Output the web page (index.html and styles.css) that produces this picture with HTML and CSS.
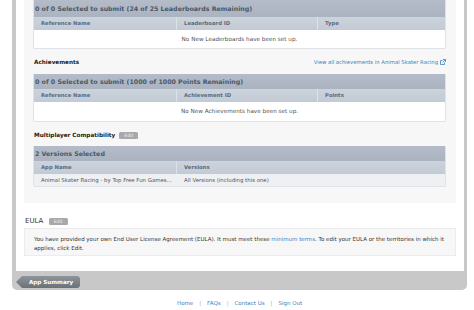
FILE: index.html
```html
<!DOCTYPE html>
<html>
<head>
<meta charset="utf-8">
<link rel="stylesheet" href="styles.css">
</head>
<body>
<div class="frame">
  <div class="sheet">
    <div class="panel">
      <div class="tbl">
        <div class="tbl-head t1">0 of 0 Selected to submit (24 of 25 Leaderboards Remaining)</div>
        <div class="cols">
          <div class="c c1">Reference Name</div>
          <div class="c c2">Leaderboard ID</div>
          <div class="c c3">Type</div>
        </div>
        <div class="empty e1">No New Leaderboards have been set up.</div>
      </div>

      <div class="title t-ach">
        <span>Achievements</span>
        <a class="ext" href="#">View all achievements in Animal Skater Racing
          <svg class="exticon" width="6" height="6" viewBox="0 0 6 6"><path d="M0.5 1.5h2M0.5 1.5v4h4v-2" fill="none" stroke="#3b82c4" stroke-width="0.8"/><path d="M3 0.5h2.5v2.5M5.5 0.5L2.5 3.5" fill="none" stroke="#3b82c4" stroke-width="0.8"/></svg>
        </a>
      </div>

      <div class="tbl">
        <div class="tbl-head">0 of 0 Selected to submit (1000 of 1000 Points Remaining)</div>
        <div class="cols">
          <div class="c c1">Reference Name</div>
          <div class="c c2">Achievement ID</div>
          <div class="c c3">Points</div>
        </div>
        <div class="empty e2">No New Achievements have been set up.</div>
      </div>

      <div class="title t-mp">
        <span>Multiplayer Compatibility <span class="edit">Edit</span></span>
      </div>

      <div class="tbl">
        <div class="tbl-head">2 Versions Selected</div>
        <div class="cols">
          <div class="c c1">App Name</div>
          <div class="c c2 last">Versions</div>
        </div>
        <div class="row">
          <div class="c c1">Animal Skater Racing - by Top Free Fun Games...</div>
          <div class="c c2">All Versions (including this one)</div>
        </div>
      </div>
    </div>

    <div class="eula-head">EULA <span class="edit">Edit</span></div>
    <div class="eula-box">You have provided your own End User License Agreement (EULA). It must meet these <a href="#">minimum terms</a>. To edit your EULA or the territories in which it applies, click Edit.</div>
  </div>
  <div class="bottom">
    <a class="back" href="#">App Summary</a>
  </div>
</div>
<div class="footer">
  <a href="#">Home</a><span class="sep">|</span><a href="#">FAQs</a><span class="sep">|</span><a href="#">Contact Us</a><span class="sep">|</span><a href="#">Sign Out</a>
</div>
</body>
</html>
```

FILE: styles.css
```css
* { box-sizing: border-box; }
html, body { margin: 0; padding: 0; background: #fff; }
body {
  font-family: "DejaVu Sans", "Noto Sans", sans-serif;
  font-size: 5.7px;
  color: #333;
  width: 474px;
  height: 310px;
  overflow: hidden;
}
a { color: #3a7fc2; text-decoration: none; }

.frame {
  margin: 0 7px 0 12px;
  background: #c8c8c8;
  padding: 0 3px 0 4px;
  border-radius: 0 0 5px 5px;
}
.sheet {
  background: #fff;
  padding: 0 8px 15px 8px;
}
.panel {
  background: #f7f7f7;
  padding: 0 10px 16px 9px;
}

.tbl {
  background: #fff;
  border: 1px solid #dfe2e6;
  border-top: none;
  border-radius: 0 0 2px 2px;
}
.tbl-head {
  height: 15px;
  line-height: 15px;
  padding-left: 1px;
  font-weight: bold;
  font-size: 6.3px;
  color: #4b5869;
  background: linear-gradient(#b3bcc8, #aab3bf);
}
.tbl-head.t1 { height: 17px; line-height: 17px; }
.cols {
  display: flex;
  height: 13px;
  background: linear-gradient(#ccd3dc, #c2cad5);
  font-weight: bold;
  font-size: 5.3px;
  color: #5b6a7c;
}
.c { line-height: 13px; padding-left: 7px; white-space: nowrap; overflow: hidden; }
.cols .c { border-right: 1px solid #dde2e8; }
.cols .c3, .cols .last { border-right: none; }
.c1 { width: 143px; }
.c2 { width: 141px; }
.c3 { flex: 1; }
.cols .last { flex: 1; }
.empty {
  text-align: center;
  color: #555;
  height: 18px;
  line-height: 18px;
}
.e2 { height: 19px; line-height: 19px; }
.row {
  display: flex;
  height: 12px;
  background: #eef0f3;
  color: #555;
  font-size: 5.4px;
}
.row .c { line-height: 12px; }
.row .c2 { flex: 1; }

.title {
  display: flex;
  justify-content: space-between;
  align-items: center;
  height: 12px;
  font-weight: bold;
  font-size: 5.7px;
  color: #222;
  padding-left: 1px;
}
.t-ach { margin: 7px 0 6px; }
.t-mp { margin: 7px 0 5px; }
.ext { font-weight: normal; font-size: 5.3px; display: flex; align-items: center; gap: 2px; }
.exticon { display: block; }

.edit {
  display: inline-block;
  vertical-align: middle;
  background: #a9a9a9;
  color: #f0f0f0;
  font-weight: normal;
  font-size: 4.6px;
  height: 7px;
  line-height: 7px;
  padding: 0 5px;
  border-radius: 1.5px;
  margin-left: 2px;
}

.eula-head {
  margin-top: 12px;
  height: 12px;
  line-height: 12px;
  font-size: 7px;
  color: #333;
  padding-left: 1px;
  margin-bottom: 1px;
}
.eula-head .edit { margin-left: 3px; font-size: 4.6px; }
.eula-box {
  height: 28px;
  background: #f7f7f7;
  border: 1px solid #ececec;
  padding: 6px 8px 0 9px;
  font-size: 5.5px;
  line-height: 9px;
  color: #333;
}

.bottom {
  padding: 5px 0 2px;
}
.back {
  display: block;
  width: 64px;
  height: 12px;
  line-height: 12px;
  padding-left: 13px;
  color: #fff;
  font-weight: bold;
  font-size: 5.6px;
  background: linear-gradient(#8e949a, #6b7178);
  clip-path: polygon(6px 0, 62px 0, 64px 2px, 64px 10px, 62px 12px, 6px 12px, 0 6px);
}

.footer {
  padding-top: 9px;
  line-height: 8px;
  font-size: 5.5px;
  padding-left: 177px;
  color: #999;
}
.sep { margin: 0 6px; color: #aaa; }
```
